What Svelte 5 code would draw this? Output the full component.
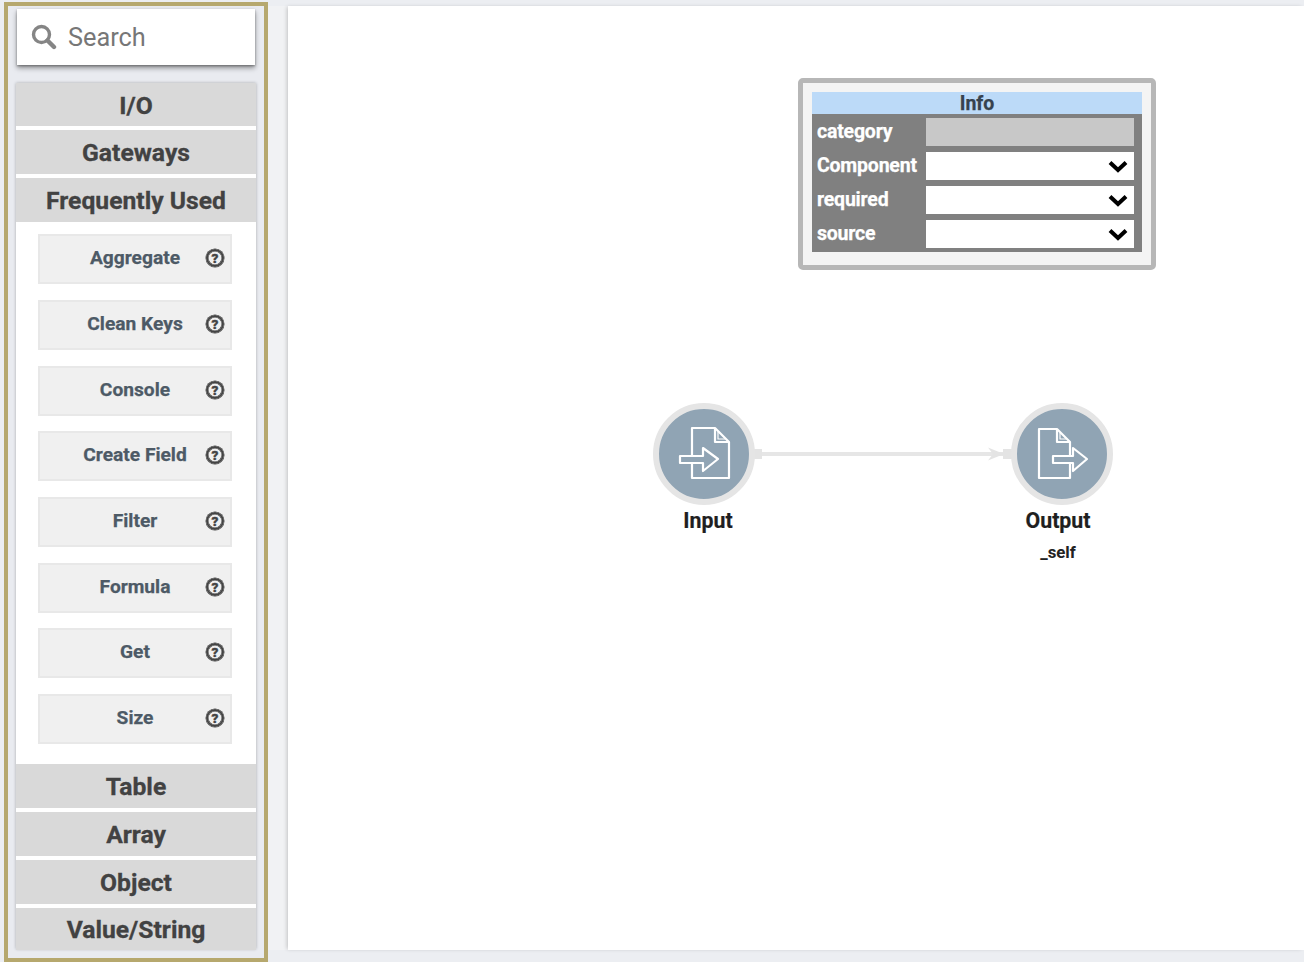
<script>
  const before = ['I/O', 'Gateways'];
  const items = ['Aggregate', 'Clean Keys', 'Console', 'Create Field', 'Filter', 'Formula', 'Get', 'Size'];
  const after = ['Table', 'Array', 'Object', 'Value/String'];
  const fields = [
    { name: 'category', disabled: true },
    { name: 'Component' },
    { name: 'required' },
    { name: 'source' }
  ];
</script>

<div class="page">
  <aside class="sidebar">
    <div class="search">
      <svg class="search-icon" width="26" height="26" viewBox="0 0 26 26" fill="none" stroke="#858585">
        <circle cx="10.5" cy="10.5" r="8" stroke-width="3.4" />
        <path d="M16.5 16.5L23 23" stroke-width="4.4" stroke-linecap="round" />
      </svg>
      <span>Search</span>
    </div>

    <div class="accordion">
      {#each before as h, i}
        <div class="head" class:first={i === 0}>{h}</div>
      {/each}
      <div class="head">Frequently Used</div>
      <div class="panel">
        {#each items as item}
          <div class="item">
            <span>{item}</span>
            <span class="help">?</span>
          </div>
        {/each}
      </div>
      {#each after as h, i}
        <div class="head" class:last={i === after.length - 1}>{h}</div>
      {/each}
    </div>
  </aside>

  <main class="canvas">
    <div class="info">
      <div class="info-inner">
        <div class="info-title">Info</div>
        <div class="info-rows">
          {#each fields as f}
            <div class="row">
              <span class="row-name">{f.name}</span>
              <div class="control" class:disabled={f.disabled}>
                {#if !f.disabled}
                  <svg width="20" height="13" viewBox="0 0 20 13" fill="none" stroke="#000" stroke-width="4">
                    <path d="M2 2.5L10 10L18 2.5" />
                  </svg>
                {/if}
              </div>
            </div>
          {/each}
        </div>
      </div>
    </div>

    <svg class="edge" width="270" height="20" viewBox="0 0 270 20">
      <rect x="0" y="5" width="8" height="10" fill="#e4e4e4" />
      <rect x="8" y="8" width="242" height="4" fill="#e6e6e6" />
      <path d="M234 3.5L250 10L234 16.5L239 10Z" fill="#e4e4e4" />
      <rect x="249" y="5" width="9" height="10" fill="#e4e4e4" />
    </svg>

    <div class="node input-node">
      <div class="bubble">
        <svg width="90" height="90" viewBox="5 5 90 90" fill="none" stroke="#fff" stroke-width="2.2" stroke-linejoin="round">
          <path d="M38 52V24H61L75 38V74H38V59" />
          <path d="M61 25V38H75" />
          <path d="M64 28L64 35H71" stroke-width="1.2" />
          <path d="M26 52H49V44L64 55L49 67V59H26Z" />
        </svg>
      </div>
      <div class="label">Input</div>
    </div>

    <div class="node output-node">
      <div class="bubble">
        <svg width="90" height="90" viewBox="6 5 90 90" fill="none" stroke="#fff" stroke-width="2.2" stroke-linejoin="round">
          <path d="M59 52V38L46 25H28V74H59V59" />
          <path d="M46 25V38H59" />
          <path d="M49 29V35H55" stroke-width="1.2" />
          <path d="M42 52H62V44L76 55L62 67V59H42Z" />
        </svg>
      </div>
      <div class="label">Output</div>
      <div class="sub">_self</div>
    </div>
  </main>
</div>

<style>
  :global(body) {
    margin: 0;
    background: #fff;
    font-family: Roboto, "Liberation Sans", sans-serif;
  }
  .page {
    width: 1304px;
    height: 962px;
    background: #eceef2;
    display: flex;
    overflow: hidden;
    box-sizing: border-box;
  }
  .sidebar {
    box-sizing: border-box;
    width: 264px;
    height: 960px;
    margin: 2px 0 0 4px;
    border: 4px solid #b6a86e;
    background: #e9ebf0;
    padding: 3px 8px 9px 8px;
    display: flex;
    flex-direction: column;
    flex: none;
  }
  .search {
    box-sizing: border-box;
    height: 56px;
    margin: 0 1px;
    background: #fff;
    box-shadow: 0 1px 2px rgba(0, 0, 0, 0.3), 0 3px 5px rgba(0, 0, 0, 0.4);
    display: flex;
    align-items: center;
    color: #777;
    font-size: 25.3px;
    padding-left: 14px;
    gap: 11px;
    flex: none;
  }
  .search-icon { margin-top: -1px; }
  .accordion {
    margin-top: 18px;
    background: #fff;
    flex: 1;
    display: flex;
    flex-direction: column;
    gap: 4px;
    min-height: 0;
    box-shadow: 0 0 3px rgba(0, 0, 0, 0.28);
  }
  .head {
    height: 44px;
    background: #d9d9d9;
    color: #424242;
    font-weight: 700;
    font-size: 24.7px;
    line-height: 45px;
    text-align: center;
    flex: none;
    box-sizing: border-box;
    -webkit-text-stroke: 0.3px #424242;
  }
  .head.first { height: 43px; }
  .head.last { height: 42px; line-height: 43px; }
  .panel {
    margin-top: -4px;
    margin-bottom: -4px;
    height: 542px;
    box-sizing: border-box;
    padding: 12.3px 24px 0 22px;
    display: flex;
    flex-direction: column;
    gap: 15.7px;
    flex: none;
  }
  .item {
    position: relative;
    box-sizing: border-box;
    height: 50px;
    background: #f0f0f0;
    border: 2px solid #e8e8e8;
    color: #4d5a66;
    font-weight: 700;
    font-size: 19.2px;
    line-height: 43px;
    text-align: center;
    flex: none;
    -webkit-text-stroke: 0.25px #4d5a66;
  }
  .help {
    position: absolute;
    right: 6px;
    top: 13px;
    box-sizing: border-box;
    width: 18px;
    height: 18px;
    border: 2px solid #444;
    box-shadow: 0 0 0 0.5px #444, inset 0 0 0 0.5px #444;
    border-radius: 50%;
    color: #444;
    font-size: 13.5px;
    font-weight: 900;
    line-height: 14px;
    text-align: center;
    -webkit-text-stroke: 0.4px #444;
  }
  .canvas {
    position: relative;
    margin: 6px 0 0 20px;
    height: 944px;
    flex: 1;
    background: #fff;
    box-shadow: -2px 0 4px -1px rgba(0, 0, 0, 0.2), -20px 0 0 0 #f1f2f4;
  }
  .info {
    position: absolute;
    left: 510px;
    top: 72px;
    box-sizing: border-box;
    width: 358px;
    height: 192px;
    border: 5px solid #b7b7b7;
    border-radius: 5px;
    background: #f4f4f4;
    padding: 9px;
  }
  .info-inner {
    width: 330px;
    height: 160px;
    background: #808080;
  }
  .info-title {
    height: 22px;
    background: #bcdaf8;
    color: #36424e;
    font-weight: 700;
    font-size: 19.5px;
    line-height: 23px;
    text-align: center;
    -webkit-text-stroke: 0.25px #36424e;
  }
  .info-rows {
    padding: 4px 8px 0 5px;
    display: flex;
    flex-direction: column;
    gap: 6px;
  }
  .row {
    display: flex;
    height: 28px;
    justify-content: space-between;
    align-items: center;
  }
  .row-name {
    color: #fff;
    font-weight: 700;
    font-size: 19.5px;
    line-height: 28px;
    letter-spacing: -0.2px;
    -webkit-text-stroke: 0.25px #fff;
  }
  .control {
    box-sizing: border-box;
    width: 208px;
    height: 28px;
    background: #fff;
    display: flex;
    align-items: center;
    justify-content: flex-end;
    padding-right: 6px;
  }
  .control.disabled { background: #c8c8c8; }
  .edge {
    position: absolute;
    left: 466px;
    top: 438px;
  }
  .node {
    position: absolute;
    top: 397px;
    width: 140px;
    text-align: center;
  }
  .input-node { left: 346px; }
  .output-node { left: 704px; }
  .bubble {
    box-sizing: border-box;
    width: 102px;
    height: 102px;
    margin: 0 auto;
    border-radius: 50%;
    background: #90a4b4;
    border: 6px solid #e5e5e5;
  }
  .bubble svg { display: block; }
  .label {
    margin-top: 2px;
    margin-left: 8px;
    color: #1f1f1f;
    font-weight: 700;
    font-size: 21.3px;
    line-height: 28px;
    -webkit-text-stroke: 0.2px #1f1f1f;
  }
  .output-node .label, .output-node .sub { margin-left: -8px; }
  .sub {
    margin-top: 6.5px;
    color: #222;
    font-weight: 700;
    font-size: 16.8px;
    line-height: 20px;
  }
</style>
